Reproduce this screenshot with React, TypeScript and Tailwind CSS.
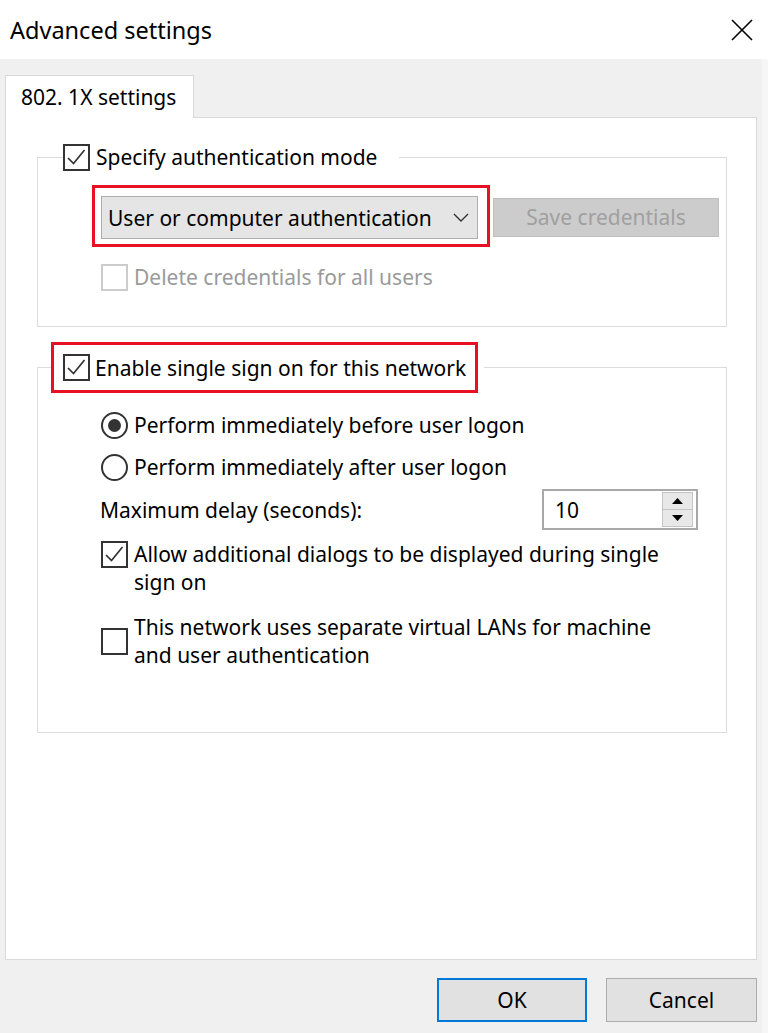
import React from 'react'

function CheckBox({ checked, disabled }: { checked?: boolean; disabled?: boolean }) {
  return (
    <span
      className={`flex h-[27px] w-[27px] shrink-0 items-center justify-center border-2 bg-white ${
        disabled ? 'border-[#cccccc]' : 'border-[#333333]'
      }`}
    >
      {checked && (
        <svg width="23" height="23" viewBox="0 0 23 23" fill="none">
          <path d="M3 12 L8.5 17.5 L19.5 4" stroke="#333333" strokeWidth="1.7" />
        </svg>
      )}
    </span>
  )
}

function Radio({ checked }: { checked?: boolean }) {
  return (
    <span className="flex h-[27px] w-[27px] shrink-0 items-center justify-center rounded-full border-2 border-[#333333] bg-white">
      {checked && <span className="h-[13px] w-[13px] rounded-full bg-[#333333]" />}
    </span>
  )
}

function SpinBox({ value }: { value: string }) {
  return (
    <div className="flex h-[41px] w-[156px] items-stretch border-2 border-[#a9a9a9] bg-white">
      <div className="flex flex-1 items-center pl-[11px]">{value}</div>
      <div className="my-[1px] mr-[3px] flex w-[31px] flex-col">
        <div className="flex flex-1 items-center justify-center border border-[#c4c4c4] bg-[#e8e8e8]">
          <svg width="11" height="6" viewBox="0 0 11 6">
            <path d="M0 6 L5.5 0 L11 6 Z" fill="#000000" />
          </svg>
        </div>
        <div className="flex flex-1 items-center justify-center border border-t-0 border-[#c4c4c4] bg-[#e8e8e8]">
          <svg width="11" height="6" viewBox="0 0 11 6">
            <path d="M0 0 L5.5 6 L11 0 Z" fill="#000000" />
          </svg>
        </div>
      </div>
    </div>
  )
}

export default function App() {
  return (
    <div className="flex h-[1033px] w-[768px] flex-col overflow-hidden bg-white font-['Noto_Sans',sans-serif] text-[21px] leading-[28px] text-black">
      {/* Title bar */}
      <div className="flex h-[59px] shrink-0 items-center justify-between bg-white pl-[10px] pr-[15px]">
        <span className="text-[23.5px] leading-[30px]">Advanced settings</span>
        <svg width="22" height="22" viewBox="0 0 22 22" className="mt-[1px]">
          <path d="M1 1 L21 21 M21 1 L1 21" stroke="#000000" strokeWidth="1.6" />
        </svg>
      </div>

      {/* Body */}
      <div className="flex flex-1 flex-col border-r-[6px] border-[#f6f6f6] bg-[#f0f0f0] pl-[5px] pr-[5px] pt-[16px]">
        {/* Tab */}
        <div className="relative z-10 -mb-px flex h-[43px] w-[189px] items-center border border-b-0 border-[#d9d9d9] bg-white pl-[15px]">
          802. 1X settings
        </div>

        {/* Tab panel */}
        <div className="flex h-[843px] flex-col border border-[#d9d9d9] bg-white pt-[25px]">
          <fieldset className="ml-[31px] mr-[29px] border border-[#dcdcdc] pb-[35px]">
            <legend className="ml-[25px] flex h-[28px] items-center gap-[6px] pr-[22px]">
              <CheckBox checked />
              <span>Specify authentication mode</span>
            </legend>
            <div className="ml-[54px] mt-[14px] flex items-center">
              <div className="border-[3px] border-[#e81123] pb-[5px] pl-[6px] pr-[9px] pt-[8px]">
                <div className="flex h-[43px] w-[377px] items-center justify-between border border-[#adadad] bg-[#e5e5e5] pl-[6px] pr-[8px]">
                  <span>User or computer authentication</span>
                  <svg width="16" height="9" viewBox="0 0 16 9">
                    <path d="M1 1 L8 8 L15 1" stroke="#333333" strokeWidth="1.4" fill="none" />
                  </svg>
                </div>
              </div>
              <button className="ml-[3px] mt-[2px] flex h-[39px] w-[226px] items-center justify-center border border-[#bfbfbf] bg-[#cccccc] text-[#a0a0a0]">
                Save credentials
              </button>
            </div>
            <div className="ml-[63px] mt-[16px] flex items-center gap-[6px] text-[#9a9a9a]">
              <CheckBox disabled />
              <span>Delete credentials for all users</span>
            </div>
          </fieldset>

          <fieldset className="ml-[31px] mr-[29px] mt-[15px] border border-[#dcdcdc] pb-[63px]">
            <legend className="ml-[13px] pr-[6px]">
              <div className="flex h-[51px] items-center gap-[5px] border-[3px] border-[#e81123] pl-[9px] pr-[9px]">
                <CheckBox checked />
                <span>Enable single sign on for this network</span>
              </div>
            </legend>
            <div className="ml-[63px] mr-[28px] flex flex-col">
              <div className="mt-[18px] flex h-[28px] items-center gap-[6px]">
                <Radio checked />
                <span>Perform immediately before user logon</span>
              </div>
              <div className="mt-[14px] flex h-[28px] items-center gap-[6px]">
                <Radio />
                <span>Perform immediately after user logon</span>
              </div>
              <div className="mt-[8px] flex items-center justify-between">
                <span className="-ml-px">Maximum delay (seconds):</span>
                <SpinBox value="10" />
              </div>
              <div className="mt-[10px] flex items-start gap-[6px]">
                <span className="mt-px">
                  <CheckBox checked />
                </span>
                <span>
                  Allow additional dialogs to be displayed during single
                  <br />
                  sign on
                </span>
              </div>
              <div className="mt-[17px] flex items-center gap-[6px]">
                <CheckBox />
                <span>
                  This network uses separate virtual LANs for machine
                  <br />
                  and user authentication
                </span>
              </div>
            </div>
          </fieldset>
        </div>

        {/* Dialog buttons */}
        <div className="mt-[18px] flex justify-end gap-[19px]">
          <button className="flex h-[44px] w-[150px] items-center justify-center border-2 border-[#0078d7] bg-[#e1e1e1]">
            OK
          </button>
          <button className="flex h-[44px] w-[151px] items-center justify-center border border-[#adadad] bg-[#e1e1e1]">
            Cancel
          </button>
        </div>
      </div>
    </div>
  )
}
